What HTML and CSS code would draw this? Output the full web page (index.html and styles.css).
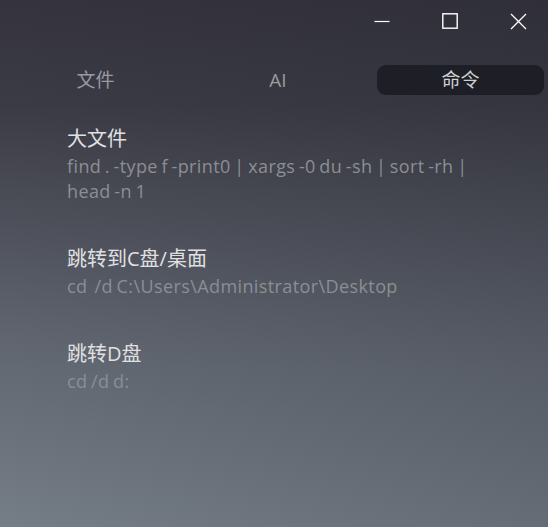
FILE: index.html
```html
<!DOCTYPE html>
<html lang="zh">

<head>
    <meta charset="utf-8">
    <title>命令</title>
    <link rel="stylesheet" href="styles.css">
</head>

<body>
    <div class="window">
        <div class="title-bar">
            <button class="win-btn" title="最小化">
                <svg width="16" height="16" viewBox="0 0 16 16">
                    <path d="M0.5 8.5 H15.5" stroke="#fff" stroke-width="1.2" fill="none" />
                </svg>
            </button>
            <button class="win-btn" title="最大化">
                <svg width="16" height="16" viewBox="0 0 16 16">
                    <rect x="0.8" y="0.8" width="14.4" height="14.4" stroke="#fff" stroke-width="1.4" fill="none" />
                </svg>
            </button>
            <button class="win-btn" title="关闭">
                <svg width="17" height="17" viewBox="0 0 17 17">
                    <path d="M1 1 L16 16 M16 1 L1 16" stroke="#fff" stroke-width="1.3" fill="none" />
                </svg>
            </button>
        </div>
        <div class="tabs">
            <div class="tab">文件</div>
            <div class="tab">AI</div>
            <div class="tab active">命令</div>
        </div>
        <div class="list">
            <div class="item">
                <div class="item-title">大文件</div>
                <div class="item-cmd">find . -type f -print0 | xargs -0 du -sh | sort -rh | head -n 1</div>
            </div>
            <div class="item">
                <div class="item-title">跳转到C盘/桌面</div>
                <div class="item-cmd">cd &nbsp;/d C:\Users\Administrator\Desktop</div>
            </div>
            <div class="item">
                <div class="item-title">跳转D盘</div>
                <div class="item-cmd">cd /d d:</div>
            </div>
        </div>
    </div>
</body>

</html>
```

FILE: styles.css
```css
html,
body {
    margin: 0;
    padding: 0;
    height: 100%;
}

body {
    font-family: "Open Sans", "Noto Sans CJK SC", sans-serif;
    background:
        linear-gradient(to right, rgba(0, 0, 0, 0) 0%, rgba(20, 22, 30, 0.16) 100%),
        linear-gradient(to bottom, #35343e 0%, #3b3b45 20%, #50535d 45%, #646a74 70%, #757d86 100%);
    overflow: hidden;
}

.window {
    height: 100%;
    box-sizing: border-box;
}

.title-bar {
    display: flex;
    justify-content: flex-end;
    align-items: center;
    gap: 28px;
    height: 42px;
    padding-right: 10px;
}

.win-btn {
    width: 40px;
    height: 32px;
    padding: 0;
    border: none;
    background: transparent;
    display: flex;
    align-items: center;
    justify-content: center;
}

.tabs {
    display: grid;
    grid-template-columns: repeat(3, 167px);
    column-gap: 15.5px;
    padding: 23px 0 0 12px;
}

.tab {
    height: 30px;
    line-height: 30px;
    text-align: center;
    font-size: 19px;
    color: #9a9aa1;
    border-radius: 9px;
}

.tab.active {
    background-color: #1e1e26;
    color: #cfcfd3;
}

.list {
    padding: 29px 71px 0 67px;
}

.item {
    margin-bottom: 40px;
}

.item-title {
    font-size: 20px;
    line-height: 30px;
    color: #e0e0e3;
}

.item-cmd {
    font-size: 18px;
    line-height: 25px;
    letter-spacing: 0.4px;
    word-spacing: -1.5px;
    color: #8c8e94;
}
```
